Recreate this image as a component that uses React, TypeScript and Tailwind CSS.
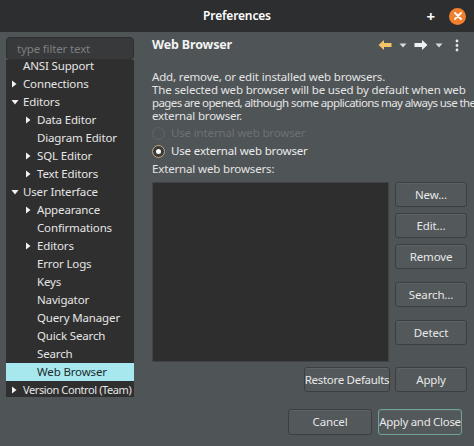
import React from 'react';

type Node = { label: string; level: number; arrow?: 'right' | 'down'; selected?: boolean; tight?: boolean };

const tree: Node[] = [
  { label: 'ANSI Support', level: 0 },
  { label: 'Connections', level: 0, arrow: 'right' },
  { label: 'Editors', level: 0, arrow: 'down' },
  { label: 'Data Editor', level: 1, arrow: 'right' },
  { label: 'Diagram Editor', level: 1 },
  { label: 'SQL Editor', level: 1, arrow: 'right' },
  { label: 'Text Editors', level: 1, arrow: 'right' },
  { label: 'User Interface', level: 0, arrow: 'down' },
  { label: 'Appearance', level: 1, arrow: 'right' },
  { label: 'Confirmations', level: 1 },
  { label: 'Editors', level: 1, arrow: 'right' },
  { label: 'Error Logs', level: 1 },
  { label: 'Keys', level: 1 },
  { label: 'Navigator', level: 1 },
  { label: 'Query Manager', level: 1 },
  { label: 'Quick Search', level: 1 },
  { label: 'Search', level: 1 },
  { label: 'Web Browser', level: 1, selected: true },
  { label: 'Version Control (Team)', level: 0, arrow: 'right', tight: true },
];

function Arrow({ dir }: { dir: 'right' | 'down' }) {
  return dir === 'right' ? (
    <svg width="6" height="8" viewBox="0 0 6 8"><path d="M1 0.5 L5.5 4 L1 7.5 Z" fill="#f2f2f2" /></svg>
  ) : (
    <svg width="8" height="6" viewBox="0 0 8 6"><path d="M0.5 1 L7.5 1 L4 5.5 Z" fill="#f2f2f2" /></svg>
  );
}

function Caret() {
  return (
    <svg width="8" height="5" viewBox="0 0 8 5"><path d="M0.5 0.5 L7.5 0.5 L4 4.5 Z" fill="#d8dadb" /></svg>
  );
}

function Btn({ children, className = '' }: { children: React.ReactNode; className?: string }) {
  return (
    <div className={`flex items-center justify-center whitespace-nowrap rounded-[3px] border border-[#3b3f41] bg-[#53585b] text-[11.5px] text-[#e8e8e8] shadow-[inset_0_1px_0_#5d6265] ${className}`}>
      {children}
    </div>
  );
}

export default function App() {
  return (
    <div className="w-[474px] h-[446px] bg-[#4f5457] flex flex-col overflow-hidden text-[#e4e4e4] tracking-[-0.15px]" style={{ fontFamily: '"Noto Sans", "Open Sans", sans-serif' }}>
      {/* Title bar */}
      <div className="h-[32px] shrink-0 bg-[#2d2e2f] grid grid-cols-[1fr_auto_1fr] items-center">
        <div />
        <span className="text-[12px] font-semibold text-white">Preferences</span>
        <div className="flex items-center justify-end gap-[14px] pr-[8px]">
          <span className="text-[15px] font-bold text-white leading-none">+</span>
          <div className="w-[17px] h-[17px] rounded-full bg-[#f07f2e] flex items-center justify-center">
            <svg width="8" height="8" viewBox="0 0 8 8"><path d="M1 1 L7 7 M7 1 L1 7" stroke="#fff" strokeWidth="1.8" strokeLinecap="round" /></svg>
          </div>
        </div>
      </div>

      {/* Main */}
      <div className="h-[365px] shrink-0 flex pt-[5px] pl-[6px] pr-[7px]">
        {/* Left: filter + tree */}
        <div className="w-[128px] shrink-0 flex flex-col">
          <div className="h-[23px] rounded-[4px] bg-[#38393a] border border-[#2f3031] flex items-center px-[10px] text-[11.5px] text-[#7c7f81]">
            type filter text
          </div>
          <div className="flex-1 bg-[#2f2f2f] overflow-hidden">
            <div className="mt-[-3px]">
              {tree.map((n, i) => (
                <div
                  key={i}
                  className={`h-[18px] flex items-center text-[11.5px] whitespace-nowrap ${n.selected ? 'bg-[#a7e8ee] text-[#1d2b2d]' : 'text-[#e6e6e6]'} ${n.level === 0 ? 'pl-[5px]' : 'pl-[19px]'}`}
                >
                  <span className="w-[12px] shrink-0 flex items-center">{n.arrow && <Arrow dir={n.arrow} />}</span>
                  <span className={n.tight ? 'text-[11px] tracking-[-0.4px]' : ''}>{n.label}</span>
                </div>
              ))}
            </div>
          </div>
        </div>

        {/* Right: page */}
        <div className="w-[315px] shrink-0 ml-[18px] flex flex-col">
          <div className="h-[16px] flex items-center justify-between">
            <span className="text-[12.5px] font-bold text-[#f2f2f2]">Web Browser</span>
            <div className="flex items-center gap-[7px] pr-[8px]">
              <svg width="14" height="12" viewBox="0 0 14 12"><path d="M0.5 6 L6 1 L6 4 L13.5 4 L13.5 8 L6 8 L6 11 Z" fill="#f3c36a" /></svg>
              <Caret />
              <svg width="14" height="12" viewBox="0 0 14 12"><path d="M13.5 6 L8 1 L8 4 L0.5 4 L0.5 8 L8 8 L8 11 Z" fill="#eef0f1" /></svg>
              <Caret />
              <svg width="4" height="13" viewBox="0 0 4 13" className="ml-[5px]">
                <circle cx="2" cy="2" r="1.4" fill="#e8e8e8" />
                <circle cx="2" cy="6.5" r="1.4" fill="#e8e8e8" />
                <circle cx="2" cy="11" r="1.4" fill="#e8e8e8" />
              </svg>
            </div>
          </div>

          <div className="mt-[17px] text-[11.5px] leading-[13px] text-[#e4e4e4] whitespace-nowrap">
            <div>Add, remove, or edit installed web browsers.</div>
            <div>The selected web browser will be used by default when web</div>
            <div className="tracking-[-0.6px]">pages are opened, although some applications may always use the</div>
            <div>external browser.</div>
          </div>

          <div className="mt-[2px] h-[18px] flex items-center gap-[6px] text-[11.5px] text-[#6c7174]">
            <span className="w-[13px] h-[13px] rounded-full border border-[#5f6467]" />
            <span>Use internal web browser</span>
          </div>
          <div className="h-[18px] flex items-center gap-[6px] text-[11.5px] text-[#ececec]">
            <span className="w-[13px] h-[13px] rounded-full border-[1.5px] border-[#c9a77c] bg-[#3a3b3c] flex items-center justify-center">
              <span className="w-[5px] h-[5px] rounded-full bg-white" />
            </span>
            <span>Use external web browser</span>
          </div>
          <div className="h-[18px] flex items-center text-[11.5px] text-[#e4e4e4]">External web browsers:</div>

          <div className="mt-[4px] h-[180px] flex">
            <div className="flex-1 bg-[#2e2e2e] border border-[#414446]" />
            <div className="w-[72px] shrink-0 ml-[6px] flex flex-col">
              <Btn className="h-[25px]">New...</Btn>
              <Btn className="h-[25px] mt-[6px]">Edit...</Btn>
              <Btn className="h-[25px] mt-[6px]">Remove</Btn>
              <Btn className="h-[25px] mt-[13px]">Search...</Btn>
              <Btn className="h-[25px] mt-[13px]">Detect</Btn>
            </div>
          </div>

          <div className="mt-[5px] flex justify-end gap-[5px]">
            <Btn className="h-[25px] w-[86px] tracking-[-0.3px]">Restore Defaults</Btn>
            <Btn className="h-[25px] w-[72px]">Apply</Btn>
          </div>
        </div>
      </div>

      {/* Footer */}
      <div className="mt-[12px] flex justify-end gap-[6px] pr-[12px]">
        <Btn className="h-[26px] w-[84px]">Cancel</Btn>
        <Btn className="h-[26px] w-[84px] !border-[#6fa39a] tracking-[-0.3px]">Apply and Close</Btn>
      </div>
    </div>
  );
}
